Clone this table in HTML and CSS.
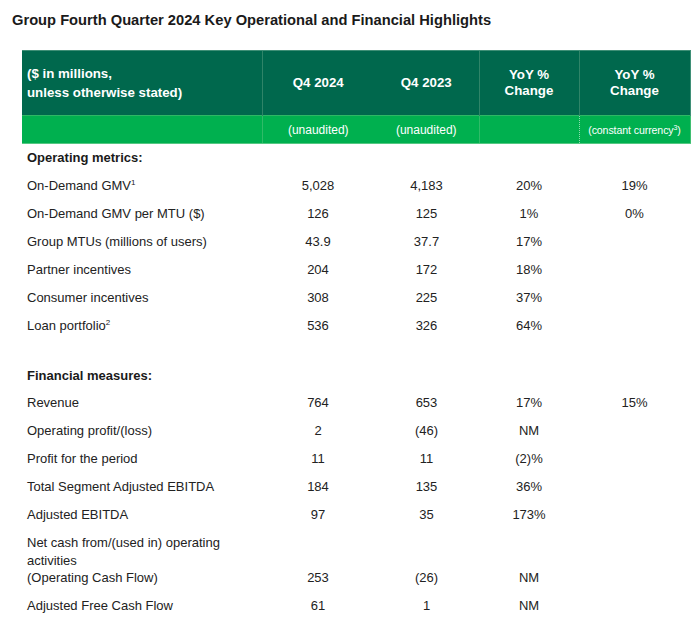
FILE: index.html
```html
<!DOCTYPE html>
<html lang="en">
<head>
<meta charset="utf-8">
<title>Group Fourth Quarter 2024 Key Operational and Financial Highlights</title>
<link rel="stylesheet" href="styles.css">
</head>
<body>
<main class="page">
  <h1 class="title">Group Fourth Quarter 2024 Key Operational and Financial Highlights</h1>
  <table class="kpi">
    <colgroup>
      <col class="c-label">
      <col class="c-q24">
      <col class="c-q23">
      <col class="c-yoy">
      <col class="c-cc">
    </colgroup>
    <thead>
      <tr class="head-main">
        <th class="label-head">($ in millions,<br>unless otherwise stated)</th>
        <th class="div">Q4 2024</th>
        <th>Q4 2023</th>
        <th class="div">YoY %<br>Change</th>
        <th class="div">YoY %<br>Change</th>
      </tr>
      <tr class="head-sub">
        <td></td>
        <td class="div">(unaudited)</td>
        <td>(unaudited)</td>
        <td class="div"></td>
        <td class="div dotted small">(constant currency<sup>3</sup>)</td>
      </tr>
    </thead>
    <tbody>
      <tr class="section"><td>Operating metrics:</td><td></td><td></td><td></td><td></td></tr>
      <tr><td>On-Demand GMV<sup>1</sup></td><td>5,028</td><td>4,183</td><td>20%</td><td>19%</td></tr>
      <tr><td>On-Demand GMV per MTU ($)</td><td>126</td><td>125</td><td>1%</td><td>0%</td></tr>
      <tr><td>Group MTUs (millions of users)</td><td>43.9</td><td>37.7</td><td>17%</td><td></td></tr>
      <tr><td>Partner incentives</td><td>204</td><td>172</td><td>18%</td><td></td></tr>
      <tr><td>Consumer incentives</td><td>308</td><td>225</td><td>37%</td><td></td></tr>
      <tr><td>Loan portfolio<sup>2</sup></td><td>536</td><td>326</td><td>64%</td><td></td></tr>
      <tr class="spacer"><td></td><td></td><td></td><td></td><td></td></tr>
      <tr class="section tight"><td>Financial measures:</td><td></td><td></td><td></td><td></td></tr>
      <tr><td>Revenue</td><td>764</td><td>653</td><td>17%</td><td>15%</td></tr>
      <tr><td>Operating profit/(loss)</td><td>2</td><td>(46)</td><td>NM</td><td></td></tr>
      <tr><td>Profit for the period</td><td>11</td><td>11</td><td>(2)%</td><td></td></tr>
      <tr><td>Total Segment Adjusted EBITDA</td><td>184</td><td>135</td><td>36%</td><td></td></tr>
      <tr><td>Adjusted EBITDA</td><td>97</td><td>35</td><td>173%</td><td></td></tr>
      <tr class="multi"><td>Net cash from/(used in) operating activities<br>(Operating Cash Flow)</td><td>253</td><td>(26)</td><td>NM</td><td></td></tr>
      <tr><td>Adjusted Free Cash Flow</td><td>61</td><td>1</td><td>NM</td><td></td></tr>
    </tbody>
  </table>
</main>
</body>
</html>
```

FILE: styles.css
```css
html, body {
  margin: 0;
  padding: 0;
  background: #ffffff;
}

body {
  font-family: "Liberation Sans", Arial, sans-serif;
  color: #1f1f1f;
}

.page {
  padding: 11px 10px 0 12px;
}

.title {
  margin: 0;
  font-size: 14.7px;
  line-height: 18px;
  font-weight: bold;
  color: #1a1a1a;
}

.kpi {
  margin: 21px 0 0 10px;
  border-collapse: collapse;
  table-layout: fixed;
  width: 668px;
  font-size: 13px;
}

.c-label { width: 240px; }
.c-q24 { width: 112px; }
.c-q23 { width: 105px; }
.c-yoy { width: 100px; }
.c-cc { width: 111px; }

.kpi th,
.kpi td {
  padding: 0;
  text-align: center;
  vertical-align: middle;
}

.head-main th {
  background: #00684d;
  color: #ffffff;
  font-weight: bold;
  font-size: 13.3px;
  line-height: 16px;
  height: 64px;
  border-top: 1px solid #3f8f76;
}

.head-main th.label-head {
  text-align: left;
  padding-left: 5px;
  line-height: 19px;
}

.head-main th.div {
  border-left: 1px solid #2f8468;
}

.head-main th:last-child {
  border-right: 1px solid #3f8f76;
}

.head-sub td {
  background: #00b04f;
  color: #ffffff;
  font-size: 12px;
  height: 27px;
  line-height: 14px;
  border-top: 1px solid #2fb765;
  border-bottom: 1px solid #55c882;
}

.head-sub td.div {
  border-left: 1px solid #2fbb68;
}

.head-sub td.dotted {
  border-left: 1px dotted #8fdcb0;
}

.head-sub td:last-child {
  border-right: 1px solid #3fbe70;
}

.head-sub td.small {
  font-size: 10.6px;
  letter-spacing: -0.1px;
}

.head-sub sup {
  font-size: 7px;
  line-height: 0;
  vertical-align: 4px;
}

.kpi tbody td {
  line-height: 17.5px;
  padding: 5.25px 0;
  color: #222222;
}

.kpi tbody td:first-child {
  text-align: left;
  padding-left: 5px;
}

.kpi tbody tr.section td:first-child {
  font-weight: bold;
  color: #1a1a1a;
}

.kpi tbody tr.section.tight td {
  padding-bottom: 4px;
}

.kpi tbody tr.spacer td {
  padding: 0;
  height: 22px;
  line-height: 0;
}

.kpi tbody tr.multi td {
  vertical-align: bottom;
}

.kpi tbody tr.multi td:first-child {
  padding-right: 40px;
}

.kpi tbody sup {
  font-size: 8px;
  line-height: 0;
  vertical-align: 5px;
}
```
